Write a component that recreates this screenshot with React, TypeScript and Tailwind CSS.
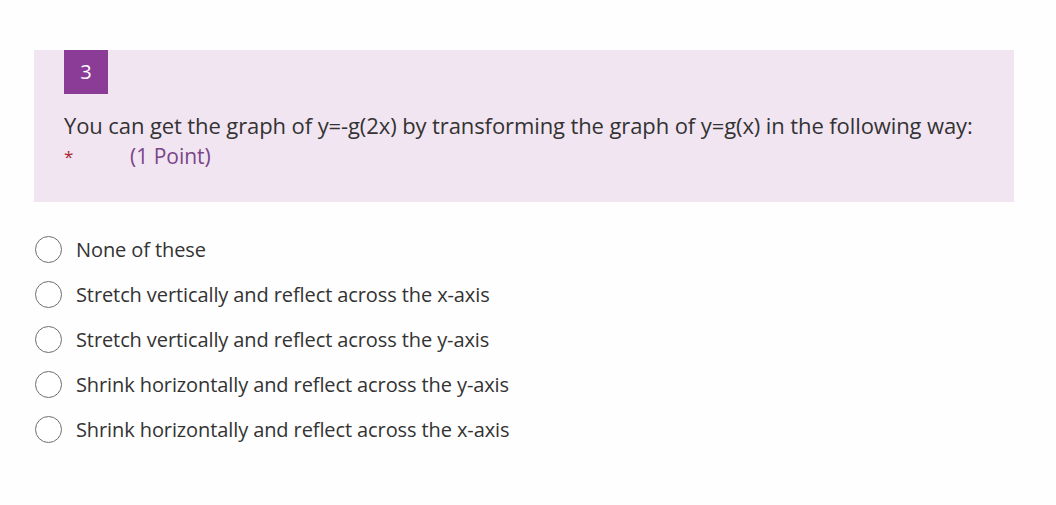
import React from "react";

const options = [
  "None of these",
  "Stretch vertically and reflect across the x-axis",
  "Stretch vertically and reflect across the y-axis",
  "Shrink horizontally and reflect across the y-axis",
  "Shrink horizontally and reflect across the x-axis",
];

export default function App() {
  return (
    <div
      className="w-[1056px] h-[505px] bg-[#fefefe] pt-[50px] pl-[34px]"
      style={{ fontFamily: '"Open Sans", "Noto Sans", sans-serif' }}
    >
      <div className="w-[980px] h-[152px] bg-[#f2e5f2] pl-[30px]">
        <div className="w-[44px] h-[44px] bg-[#8b3c97] text-white text-[20px] flex items-center justify-center">
          3
        </div>
        <div className="mt-[16px] text-[22px] leading-[30px] text-[#333333] tracking-[-0.1px]">
          You can get the graph of y=-g(2x) by transforming the graph of y=g(x) in the following way:
        </div>
        <div className="flex items-center h-[30px] mt-[2px]">
          <span className="text-[#a4262c] text-[17px] w-[66px]">*</span>
          <span className="text-[#7a4688] text-[21px]">(1 Point)</span>
        </div>
      </div>
      <div className="mt-[34px] flex flex-col gap-[18px]">
        {options.map((o) => (
          <div key={o} className="flex items-center h-[27px]">
            <div className="w-[27px] h-[27px] rounded-full border-[1.5px] border-[#6e6e6e] bg-white ml-[1px]" />
            <span className="ml-[14px] text-[20px] text-[#333333] tracking-[-0.1px]">{o}</span>
          </div>
        ))}
      </div>
    </div>
  );
}
